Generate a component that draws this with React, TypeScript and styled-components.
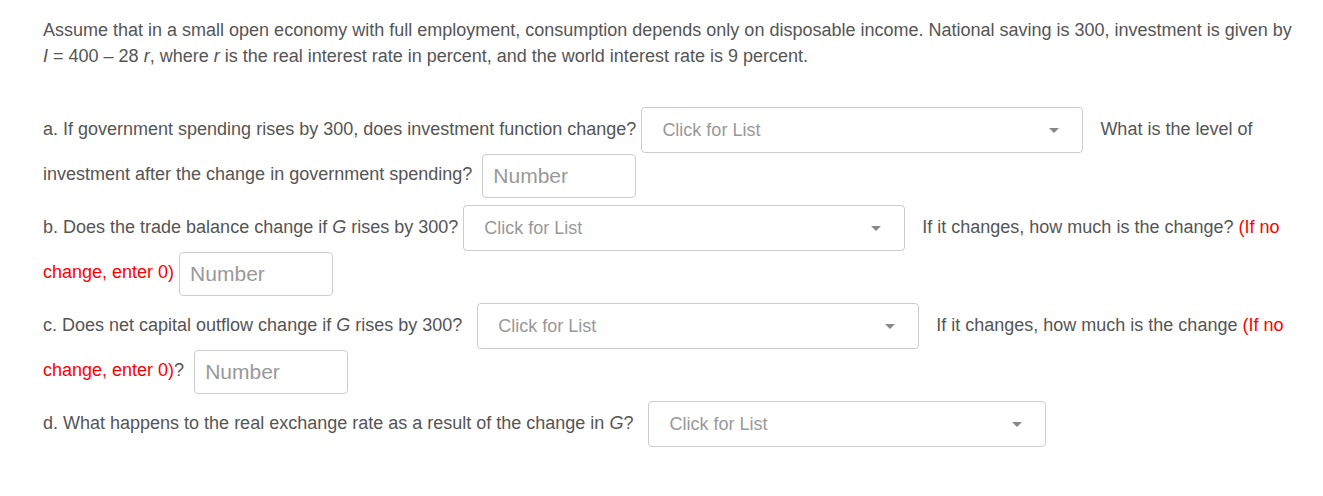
import React from 'react';
import styled, { createGlobalStyle } from 'styled-components';

const GlobalStyle = createGlobalStyle`
  body {
    margin: 0;
    background: #fff;
    font-family: "Liberation Sans", Arial, sans-serif;
    color: #555;
  }
`;

const Page = styled.div`
  padding: 17px 26px 0 43px;
  font-size: 18px;
`;

const Intro = styled.p`
  margin: 0 0 38px;
  line-height: 26px;
`;

const Question = styled.p`
  margin: 0 0 7px;
  line-height: 26px;
`;

const Warn = styled.span`
  color: #ff0000;
`;

const SelectBox = styled.span<{ $width: number; $gap?: number }>`
  display: inline-flex;
  align-items: center;
  justify-content: space-between;
  box-sizing: border-box;
  width: ${(p) => p.$width}px;
  height: 46px;
  margin: 0 12px 0 ${(p) => p.$gap ?? 0}px;
  padding: 0 20px;
  vertical-align: middle;
  border: 1px solid #ccc;
  border-radius: 4px;
  background: #fff;
  color: #999;
  font-size: 18px;
  cursor: pointer;
`;

const Caret = styled.span`
  width: 0;
  height: 0;
  margin-right: 3px;
  border-left: 5px solid transparent;
  border-right: 5px solid transparent;
  border-top: 5px solid #888;
`;

const NumberInput = styled.input<{ $gap?: number }>`
  box-sizing: border-box;
  width: 154px;
  height: 44px;
  margin: 1px 0 0 ${(p) => p.$gap ?? 0}px;
  padding: 0 10px;
  vertical-align: middle;
  border: 1px solid #ccc;
  border-radius: 4px;
  font-family: "Liberation Sans", Arial, sans-serif;
  font-size: 21px;
  color: #555;
  &::placeholder {
    color: #999;
  }
`;

function Dropdown({ width = 442, gap }: { width?: number; gap?: number }) {
  return (
    <SelectBox $width={width} $gap={gap}>
      Click for List
      <Caret />
    </SelectBox>
  );
}

export default function App() {
  return (
    <>
      <GlobalStyle />
      <Page>
        <Intro>
          Assume that in a small open economy with full employment, consumption depends only on
          disposable income. National saving is 300, investment is given by <i>I</i> = 400 – 28{' '}
          <i>r</i>, where <i>r</i> is the real interest rate in percent, and the world interest rate
          is 9 percent.
        </Intro>
        <Question>
          a. If government spending rises by 300, does investment function change? <Dropdown /> What
          is the level of investment after the change in government spending?{' '}
          <NumberInput placeholder="Number" $gap={5} />
        </Question>
        <Question>
          b. Does the trade balance change if <i>G</i> rises by 300? <Dropdown /> If it changes, how
          much is the change? <Warn>(If no change, enter 0)</Warn> <NumberInput placeholder="Number" />
        </Question>
        <Question>
          c. Does net capital outflow change if <i>G</i> rises by 300? <Dropdown gap={10} /> If it
          changes, how much is the change <Warn>(If no change, enter 0)</Warn>?{' '}
          <NumberInput placeholder="Number" $gap={5} />
        </Question>
        <Question>
          d. What happens to the real exchange rate as a result of the change in <i>G</i>?{' '}
          <Dropdown width={398} gap={10} />
        </Question>
      </Page>
    </>
  );
}
